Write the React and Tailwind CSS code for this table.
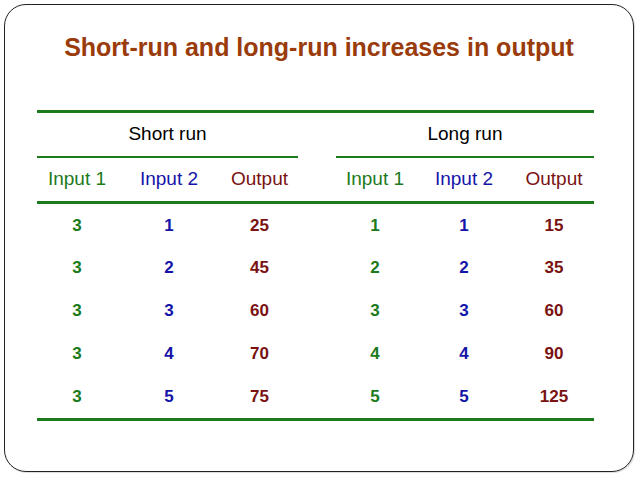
const rows = [
  [3, 1, 25, 1, 1, 15],
  [3, 2, 45, 2, 2, 35],
  [3, 3, 60, 3, 3, 60],
  [3, 4, 70, 4, 4, 90],
  [3, 5, 75, 5, 5, 125],
];

const widths = ['w-[80px]', 'w-[104px]', 'w-[77px]', 'w-[78px]', 'w-[100px]', 'w-[80px]'];
const colors = [
  'text-[#1b7a1b]',
  'text-[#1414a8]',
  'text-[#7a1212]',
  'text-[#1b7a1b]',
  'text-[#1414a8]',
  'text-[#7a1212]',
];

function Row({ cells, bold, height }) {
  return (
    <div className={`flex items-center ${height}`}>
      {cells.map((c, i) => (
        <div
          key={i}
          className={`${widths[i]} ${i === 3 ? 'ml-[38px]' : ''} ${colors[i]} text-center ${
            bold ? 'font-bold text-[17px]' : 'text-[19px]'
          }`}
        >
          {c}
        </div>
      ))}
    </div>
  );
}

export default function App() {
  return (
    <div className="w-[638px] h-[479px] bg-white pt-[4px] pl-[4px] font-['Liberation_Sans',Arial,sans-serif]">
      <div className="w-[630px] h-[468px] border border-[#222] rounded-[22px] shadow-[1px_1px_1px_rgba(0,0,0,0.15)]">
        <h1 className="mt-[27px] text-center text-[25px] leading-[30px] font-bold text-[#9a3b0c]">
          Short-run and long-run increases in output
        </h1>

        <div className="ml-[32px] mt-[48px] w-[557px]">
          <div className="h-[3px] bg-[#1b7a1b]" />

          {/* group headings */}
          <div className="flex items-center h-[43px] text-[19px] text-black">
            <div className="w-[261px] text-center">Short run</div>
            <div className="ml-[38px] w-[258px] text-center">Long run</div>
          </div>
          <div className="flex">
            <div className="w-[261px] h-[2px] bg-[#1b7a1b]" />
            <div className="ml-[38px] w-[258px] h-[2px] bg-[#1b7a1b]" />
          </div>

          <Row
            cells={['Input 1', 'Input 2', 'Output', 'Input 1', 'Input 2', 'Output']}
            height="h-[43px]"
          />
          <div className="h-[3px] bg-[#1b7a1b]" />

          {rows.map((r, idx) => (
            <Row key={idx} cells={r} bold height="h-[42.8px]" />
          ))}

          <div className="h-[3px] bg-[#1b7a1b]" />
        </div>
      </div>
    </div>
  );
}
